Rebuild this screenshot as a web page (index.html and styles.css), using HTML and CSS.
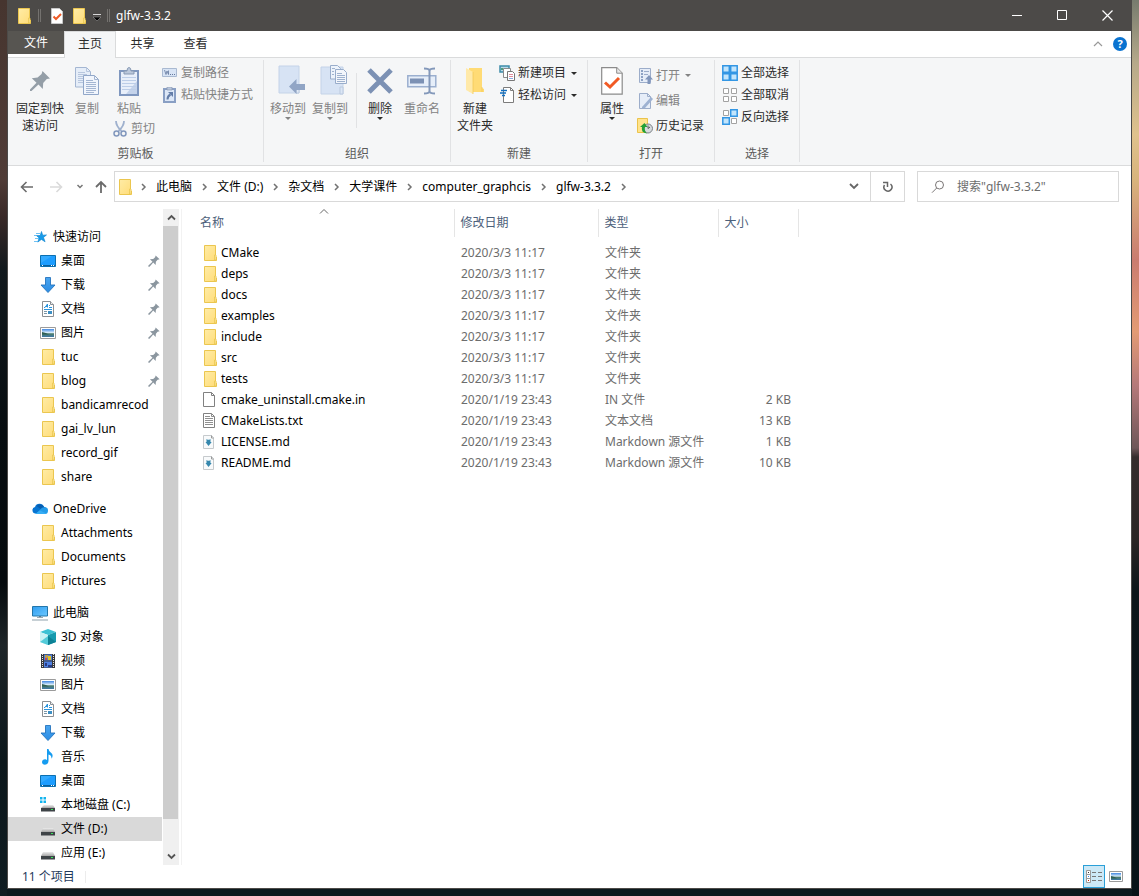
FILE: index.html
```html
<!DOCTYPE html>
<html lang="zh-CN">
<head>
<meta charset="utf-8">
<title>glfw-3.3.2</title>
<link rel="stylesheet" href="styles.css">
</head>
<body>
<svg class="sprite" width="0" height="0" aria-hidden="true">
  <defs>
    <linearGradient id="g-folder" x1="0" y1="0" x2="1" y2="1"><stop offset="0" stop-color="#ffeca6"/><stop offset="1" stop-color="#ffdc78"/></linearGradient>
    <linearGradient id="g-photo" x1="0" y1="0" x2="0" y2="1"><stop offset="0" stop-color="#3f86e0"/><stop offset="0.45" stop-color="#d9ecfb"/><stop offset="0.6" stop-color="#4d7c6a"/><stop offset="1" stop-color="#3d78a8"/></linearGradient>
    <linearGradient id="g-screen" x1="0" y1="0" x2="1" y2="1"><stop offset="0" stop-color="#2f9df0"/><stop offset="1" stop-color="#6cc8ff"/></linearGradient>
    <linearGradient id="g-drive" x1="0" y1="0" x2="0" y2="1"><stop offset="0" stop-color="#ececec"/><stop offset="1" stop-color="#a5a5a5"/></linearGradient>
    <linearGradient id="g-arrow" x1="0" y1="0" x2="0" y2="1"><stop offset="0" stop-color="#4aa5ef"/><stop offset="1" stop-color="#2b8ce4"/></linearGradient>
  </defs>
  <symbol id="folder" viewBox="0 0 16 16"><path d="M2.500 .5h11v11.500h1v3.500h-12z" fill="url(#g-folder)" stroke="#ebc64f"/><path d="M12.500 15v-5h1.500v5z" fill="#ffe9a2" stroke="#ebc64f" stroke-width=".8"/></symbol>
  <symbol id="desktop" viewBox="0 0 16 16"><path d="M.5 2.500h15v11h-15z" fill="#1e9dff" stroke="#0b6fb0"/><path d="M1 10L12 3H1z" fill="#33aaff"/><path d="M1 12.500h14" stroke="#0b5f9c"/><path d="M2 12.500h1M11 12.500h1M13 12.500h1" stroke="#fff"/></symbol>
  <symbol id="download" viewBox="0 0 16 16"><path d="M5.500 .5h5v7.500h4.500L8 15.500 1 8h4.500z" fill="url(#g-arrow)" stroke="#2674bd" stroke-width=".9"/></symbol>
  <symbol id="document" viewBox="0 0 16 16"><path d="M2.500 .5h8l3 3v12h-11z" fill="#fff" stroke="#8b8f93"/><path d="M10.500 .5v3h3" fill="#eee" stroke="#8b8f93"/><path d="M4 6.500h1L7.500 3v3.500M5.500 5.500h2M9 4.500h1M9 6.500h3M4 8.500h8" stroke="#2a93dc" fill="none"/><path d="M4 10.500h3M4 12.500h3" stroke="#7d97a8"/><path d="M8 10h4v3H8z" fill="#3c8fc4"/></symbol>
  <symbol id="picture" viewBox="0 0 16 16"><path d="M.5 2.500h15v11h-15z" fill="#fff" stroke="#9b9b9b"/><path d="M2 4h12v8H2z" fill="url(#g-photo)"/><path d="M2 7q4 .5 7 2.500H2z" fill="#2f5f55"/></symbol>
  <symbol id="pin" viewBox="0 0 16 16"><path d="M10.200 .5L15.500 5.800l-2.700.4-2.300 2.700-.3 4.300-3.200-3.200L2 15.500H.5V14L6 9 2.600 5.800l4.300-.4 2.600-2.300z" fill="#8b969f"/></symbol>
  <symbol id="star" viewBox="0 0 16 16"><path d="M9.500 2.500l1.200 3.700 3.800-.3-3 2.600 1.600 4.300-3.700-2.400-3.600 2.700 1.300-4.200-2.800-2.400 3.800.1z" fill="#169bea" stroke="#0b82cc" stroke-width=".6"/><path d="M4 4.500h4M2 6.500h3M3 9.500h4M2 12.500h4" stroke="#4bb2f1" stroke-width=".8"/></symbol>
  <symbol id="cloud" viewBox="0 0 16 16"><path d="M3.500 12.500A3.300 3.300 0 0 1 3 6a4.800 4.800 0 0 1 9-.2 3.500 3.500 0 0 1 .5 6.700z" fill="#0874d1"/><path d="M4.500 5A4.800 4.800 0 0 1 12 5.800l-3 2.500z" fill="#075eb0"/><path d="M3.500 13L10 6.800q6-2 6 2.700 0 3.500-3 3.500z" fill="#239be9"/><path d="M3 13l5-3.500 6.500 3q-1 .5-1.500.5z" fill="#36adf5"/></symbol>
  <symbol id="pc" viewBox="0 0 16 16"><path d="M.5 1.500h15v9.500H.5z" fill="url(#g-screen)" stroke="#2376aa"/><path d="M5 12.500h6" stroke="#9aa9b1"/><path d="M0 15h16" stroke="#8fa1ac"/><path d="M7 11.500h2" stroke="#547e94"/></symbol>
  <symbol id="cube" viewBox="0 0 16 16"><path d="M0 3l8-3 8 3-8 3z" fill="#3cc1d4"/><path d="M0 3l8 3v10l-8-3z" fill="#c9f2f5"/><path d="M8 6l8-3v10l-8 3z" fill="#169aae"/><path d="M0 13l8-6v9z" fill="#54cbd9"/><path d="M16 13L8 7v9z" fill="#0d8195"/></symbol>
  <symbol id="video" viewBox="0 0 16 16"><path d="M1 1h14v14H1z" fill="#37383b"/><path d="M4 1.500h8v6H4zM4 8.500h8v6H4z" fill="#4c7fe2"/><path d="M5 2h3v3H5z" fill="#b99a53"/><path d="M8 3h3v4H8z" fill="#dfc328"/><path d="M5 10h2v3H5zM8 12h4v2H8z" fill="#283c83"/><path d="M5 5h2v2H5z" fill="#c64b50"/><path d="M2.500 1v14M13.500 1v14" stroke="#e5e5e5" stroke-dasharray="1 1"/></symbol>
  <symbol id="music" viewBox="0 0 16 16"><path d="M7 0h1.500q.3 2.200 2.500 3.800 3 2.200.5 6 .2-3.600-3-4.300V12q-.2 3.500-3.500 3.700-3-.2-3-2.700.3-3 3.500-2.800L7 11z" fill="#159cf0"/></symbol>
  <symbol id="drive" viewBox="0 0 16 16"><path d="M3 7h10l2 4H1z" fill="url(#g-drive)"/><path d="M1 11h14v3.500H1z" fill="#3e4347"/><path d="M11 12.500h2" stroke="#39e45a"/></symbol>
  <symbol id="drive-win" viewBox="0 0 16 16"><path d="M4 8h9l2 3H1z" fill="url(#g-drive)"/><path d="M1 11h14v3.500H1z" fill="#3e4347"/><path d="M11 12.500h2" stroke="#39e45a"/><path d="M0 0h2.500v2.500H0zM3.500 0H6v2.500H3.500zM0 3.500h2.500V6H0zM3.500 3.500H6V6H3.500z" fill="#12b4ee"/></symbol>
  <symbol id="file" viewBox="0 0 16 16"><path d="M1.500 .5h8l3 3v11h-11z" fill="#fff" stroke="#818181"/><path d="M9.500 .5v3h3" fill="none" stroke="#818181"/></symbol>
  <symbol id="text-file" viewBox="0 0 16 16"><path d="M1.500 .5h8l3 3v11h-11z" fill="#fff" stroke="#818181"/><path d="M9.500 .5v3h3M3 3.500h5M3 5.500h8M3 7.500h8M3 9.500h8M3 11.500h8" fill="none" stroke="#909090"/></symbol>
  <symbol id="md-file" viewBox="0 0 16 16"><path d="M1.500 1.500h8l2 2v11h-10z" fill="#f8fafb" stroke="#c6cacd"/><path d="M9.500 1.500v2.500h2" fill="none" stroke="#999"/><path d="M4.500 5l1.200.7h1.600L8.500 5v3h1.200L6.500 12 3.500 8h1z" fill="#3587ad"/></symbol>
  <symbol id="big-pin" viewBox="0 0 24 24"><path d="M14.500 2L22 9.500l-3.200.6-3.600 4-.4 5.800L10.500 15.500 3.500 22H2v-1.500L8.500 13.700 3.800 9.300l5.800-.7 4-3.500z" fill="#949ea7"/></symbol>
  <symbol id="big-copy" viewBox="0 0 24 28"><path d="M.5 .5h11l4 4V20H.5z" fill="#e5edf8" stroke="#a4b6d2"/><path d="M11.500 .5v4h4M3 5.500h7M3 7.500h9M3 9.500h9M3 11.500h9M3 13.500h6M3 15.500h6" fill="none" stroke="#b7c6de"/><path d="M8.500 8.500h11l4 4v15h-15z" fill="#f1f5fc" stroke="#91a7c9"/><path d="M19.500 8.500v4h4M11 13.500h7M11 15.500h10M11 17.500h10M11 19.500h10M11 21.500h10M11 23.500h10M11 25.500h8" fill="none" stroke="#a4b6d2"/></symbol>
  <symbol id="big-paste" viewBox="0 0 20 29"><path d="M1 4h18v24H1z" fill="#e8effa" stroke="#7f97bf" stroke-width="2"/><path d="M18 14v13H7z" fill="#c4d3eb"/><path d="M5 7V4h3q0-3.500 2-3.500T12 4h3v3z" fill="#bac7db" stroke="#8799b3"/><path d="M3 10.500h14M3 13.500h14M3 16.500h14M3 19.500h14M3 22.500h14" stroke="#bdcee8"/></symbol>
  <symbol id="cut" viewBox="0 0 16 16"><path d="M3 0q0 5 5.500 10M11 0q0 5-5.500 10" fill="none" stroke="#9fb1ce" stroke-width="1.800"/><circle cx="3.500" cy="12.500" r="2.500" fill="none" stroke="#8197bd" stroke-width="1.500"/><circle cx="10.500" cy="12.500" r="2.500" fill="none" stroke="#8197bd" stroke-width="1.500"/></symbol>
  <symbol id="path" viewBox="0 0 16 16"><path d="M.5 3.500h14v8H.5z" fill="#d8e4f5" stroke="#a9b9d1"/><path d="M2.500 5l1.500 4.500L5 6l1.500 3.500V5.500" fill="none" stroke="#65799e" stroke-width=".8"/><path d="M8 9.500h1M10 9.500h1M12 9.500h1" stroke="#65799e"/></symbol>
  <symbol id="paste-link" viewBox="0 0 16 16"><path d="M2 2h11v13H2z" fill="#dce7f7" stroke="#899fc4" stroke-width="2"/><path d="M5 0h5v3H5z" fill="#b9c7dc" stroke="#8a9ab1" stroke-width=".7"/><path d="M5.500 12.500q0-3.500 3-5" fill="none" stroke="#637da8" stroke-width="2"/><path d="M6 5h5v5z" fill="#637da8"/></symbol>
  <symbol id="big-move" viewBox="0 0 28 30"><path d="M1 1h20v27H1z" fill="#d7e3f4" stroke="#c4d3e8"/><path d="M18 21l3 2v5h-3z" fill="#e1eaf6" stroke="#bac9df"/><path d="M11 21.500L18.500 14v5H27v6h-8.500v4z" fill="#91a5c5"/></symbol>
  <symbol id="big-copyto" viewBox="0 0 28 30"><path d="M1 2h22v27H1z" fill="#d7e3f4" stroke="#c4d3e8"/><path d="M20 22h3v7h-3z" fill="#dbe6f5" stroke="#bac9df"/><path d="M10.500 .5h7l3 3V14h-10z" fill="#edf3fb" stroke="#99adcb"/><path d="M15.500 4.500h8l3 3v11h-11z" fill="#f3f6fb" stroke="#99adcb"/><path d="M12 3.500h3M12 6.500h2M12 9.500h2M17 8.500h5M17 10.500h8M17 12.500h8M17 14.500h8M17 16.500h8" stroke="#9fb2ce"/></symbol>
  <symbol id="big-delete" viewBox="0 0 28 28"><path d="M3 3l22 22M25 3L3 25" stroke="#7c91b4" stroke-width="5"/></symbol>
  <symbol id="big-rename" viewBox="0 0 30 28"><path d="M.8 8.800h28v11H.8z" fill="#e6eef9" stroke="#9bafcf" stroke-width="1.500"/><path d="M3 11.500h14v5H3z" fill="#7c91b4"/><path d="M17 1.500q5 0 5.500 2 .5-2 5.500-2M22.500 3v22M17 26.500q5 0 5.500-2 .5 2 5.500 2" fill="none" stroke="#8398ba" stroke-width="2"/></symbol>
  <symbol id="big-folder" viewBox="0 0 20 28"><path d="M4 1h13v20l2 1v3H4z" fill="#ffdb75"/><path d="M1 1l7 4v22l-7-4z" fill="#ffe9a9"/><path d="M8 5v22M17 20v5" stroke="#f3c955" stroke-width=".8"/></symbol>
  <symbol id="new-item" viewBox="0 0 16 16"><path d="M1 1h9v6H1z" fill="#b9dbe9" stroke="#3c8ca9" stroke-width="1.500"/><path d="M4.500 3.500h7v9h-7z" fill="#fff" stroke="#8b8b8b"/><path d="M8.500 6.500h5l2 2v7h-7z" fill="#fff" stroke="#777"/><path d="M10 9.500h4M10 11.500h4" stroke="#df8b9d"/><path d="M10 13.500h4" stroke="#8ba9df"/><path d="M2 3h2v2H2z" fill="#4e9e7a"/></symbol>
  <symbol id="easy-access" viewBox="0 0 16 16"><path d="M4.500 .5h7l3 3v12h-10z" fill="#fff" stroke="#7c7c7c"/><path d="M11.500 .5v3h3" fill="none" stroke="#7c7c7c"/><path d="M2 3.500h6M1 6h6M3 8.500h3" stroke="#126fc0" stroke-width="1.300"/></symbol>
  <symbol id="big-props" viewBox="0 0 22 28"><path d="M.7 .7h15l5.500 5.500v21H.7z" fill="#fff" stroke="#8b8b8b" stroke-width="1.200"/><path d="M15.700 .7v5.500h5.500" fill="#e9e9e9" stroke="#8b8b8b"/><path d="M4 15.500l5 4.500 9-9" fill="none" stroke="#f15a24" stroke-width="3"/></symbol>
  <symbol id="open" viewBox="0 0 16 16"><path d="M2.500 .5h11v14h-11z" fill="#e6edf8" stroke="#9cadca"/><path d="M4 2h2v2H4zM4 5h2v2H4zM4 8h2v2H4zM4 11h2v2H4z" fill="#8da2c4"/><path d="M7 3.500h5M7 6.500h4" stroke="#9cadca"/><path d="M12 7l4 4.500h-2.500V16h-3v-4.500H8z" fill="#8196bb"/></symbol>
  <symbol id="edit" viewBox="0 0 16 16"><path d="M2.500 .5h8l3 3v12h-11z" fill="#e6edf8" stroke="#9cadca"/><path d="M5 14L14 4l2 2-8 9H5z" fill="#9eb2d2"/><path d="M10.500 .5v3h3" fill="none" stroke="#9cadca"/></symbol>
  <symbol id="history" viewBox="0 0 16 16"><path d="M.5 .5h10v14H.5z" fill="#ffe38c" stroke="#ebc34b"/><circle cx="11" cy="10.500" r="4.500" fill="#d6dadd" stroke="#7d8287"/><path d="M11 7.500v3l2-1.500" fill="none" stroke="#555"/><path d="M10 15.500Q3.500 14.500 5 9H3L7.500 5l3 4H8Q7 12.500 10 15.500z" fill="#23a036"/></symbol>
  <symbol id="select-all" viewBox="0 0 16 16"><path d="M.8 .8h6.500v6.500H.8zM8.700 .8h6.500v6.500H8.700zM.8 8.700h6.500v6.500H.8zM8.700 8.700h6.500v6.500H8.700z" fill="#c2e5fc" stroke="#3296e4" stroke-width="1.500"/></symbol>
  <symbol id="select-none" viewBox="0 0 16 16"><path d="M1.500 1.500h5v5h-5zM9.500 1.500h5v5h-5zM1.500 9.500h5v5h-5zM9.500 9.500h5v5h-5z" fill="#fff" stroke="#a2a2a2"/></symbol>
  <symbol id="select-inv" viewBox="0 0 16 16"><path d="M1.500 1.500h5v5h-5zM9.500 9.500h5v5h-5z" fill="#fff" stroke="#a2a2a2"/><path d="M8.700 .8h6.500v6.500H8.700zM.8 8.700h6.500v6.500H.8z" fill="#c2e5fc" stroke="#3296e4" stroke-width="1.500"/></symbol>
  <symbol id="chevron" viewBox="0 0 6 8"><path d="M1.500 1L4.500 4l-3 3" fill="none" stroke="#727272" stroke-width="1.500"/></symbol>
  <symbol id="caret" viewBox="0 0 6 3"><path d="M0 0h6L3 3z" fill="currentColor"/></symbol>
  <symbol id="props" viewBox="0 0 16 16"><path d="M2.500 .5h8l3 3v12h-11z" fill="#fff" stroke="#c8c8c8"/><path d="M4.500 8.500L7 11l5-5" fill="none" stroke="#ee5b27" stroke-width="2"/></symbol>
</svg>

<div class="window">
  <header class="titlebar">
    <svg class="i16"><use href="#folder"/></svg>
    <span class="grip"></span>
    <button class="quick" aria-label="属性"><svg class="i16"><use href="#props"/></svg></button>
    <button class="quick" aria-label="新建文件夹"><svg class="i16"><use href="#folder"/></svg></button>
    <button class="quick-more" aria-label="自定义快速访问工具栏"><svg width="8" height="7" viewBox="0 0 8 7"><path d="M0 .5h8" stroke="#d8d8d8"/><path d="M0 3h8L4 7z" fill="#000" stroke="#aaa" stroke-width=".5"/></svg></button>
    <span class="grip grip-last"></span>
    <h1 class="title">glfw-3.3.2</h1>
    <div class="controls">
      <button aria-label="最小化"><svg width="11" height="11"><path d="M0 5.500h10" stroke="#fff"/></svg></button>
      <button aria-label="最大化"><svg width="11" height="11"><path d="M.5 .5h9v9h-9z" fill="none" stroke="#fff"/></svg></button>
      <button aria-label="关闭"><svg width="11" height="11"><path d="M.5 .5l10 10M10.500 .5l-10 10" stroke="#fff" stroke-width="1.200"/></svg></button>
    </div>
  </header>

  <nav class="tabs">
    <button class="tab tab-file">文件</button>
    <button class="tab tab-active">主页</button>
    <button class="tab">共享</button>
    <button class="tab">查看</button>
    <div class="tabs-end">
      <button aria-label="最小化功能区"><svg width="10" height="6"><path d="M1 5l4-4 4 4" fill="none" stroke="#999" stroke-width="1.200"/></svg></button>
      <button class="help" aria-label="帮助">?</button>
    </div>
  </nav>

  <section class="ribbon">
    <div class="group group-clip">
      <div class="tools">
        <button class="big w-pin"><span class="pic"><svg width="24" height="24"><use href="#big-pin"/></svg></span>固定到快<br>速访问</button>
        <button class="big w-40 dim"><span class="pic"><svg width="24" height="28"><use href="#big-copy"/></svg></span>复制</button>
        <div class="stack-paste">
          <button class="big w-44 dim"><span class="pic"><svg width="20" height="29"><use href="#big-paste"/></svg></span>粘贴</button>
          <button class="small dim"><svg class="i16"><use href="#cut"/></svg>剪切</button>
        </div>
        <div class="stack">
          <button class="small dim"><svg class="i16"><use href="#path"/></svg>复制路径</button>
          <button class="small dim"><svg class="i16"><use href="#paste-link"/></svg>粘贴快捷方式</button>
        </div>
      </div>
      <div class="caption">剪贴板</div>
    </div>
    <div class="group group-org">
      <div class="tools">
        <button class="big w-42 dim"><span class="pic pic-right"><svg width="28" height="30"><use href="#big-move"/></svg></span>移动到<svg class="caret"><use href="#caret"/></svg></button>
        <button class="big w-42 dim"><span class="pic pic-right"><svg width="28" height="30"><use href="#big-copyto"/></svg></span>复制到<svg class="caret"><use href="#caret"/></svg></button>
        <span class="rule"></span>
        <button class="big w-44"><span class="pic"><svg width="28" height="28"><use href="#big-delete"/></svg></span>删除<svg class="caret"><use href="#caret"/></svg></button>
        <button class="big w-40 dim"><span class="pic"><svg width="30" height="28"><use href="#big-rename"/></svg></span>重命名</button>
      </div>
      <div class="caption">组织</div>
    </div>
    <div class="group group-new">
      <div class="tools">
        <button class="big w-44"><span class="pic"><svg width="20" height="28"><use href="#big-folder"/></svg></span>新建<br>文件夹</button>
        <div class="stack">
          <button class="small"><svg class="i16"><use href="#new-item"/></svg>新建项目<svg class="caret"><use href="#caret"/></svg></button>
          <button class="small"><svg class="i16"><use href="#easy-access"/></svg>轻松访问<svg class="caret"><use href="#caret"/></svg></button>
        </div>
      </div>
      <div class="caption">新建</div>
    </div>
    <div class="group group-open">
      <div class="tools">
        <button class="big w-40"><span class="pic"><svg width="22" height="28"><use href="#big-props"/></svg></span>属性<svg class="caret"><use href="#caret"/></svg></button>
        <div class="stack stack-tall">
          <button class="small dim"><svg class="i16"><use href="#open"/></svg>打开<svg class="caret"><use href="#caret"/></svg></button>
          <button class="small dim"><svg class="i16"><use href="#edit"/></svg>编辑</button>
          <button class="small"><svg class="i16"><use href="#history"/></svg>历史记录</button>
        </div>
      </div>
      <div class="caption">打开</div>
    </div>
    <div class="group group-select">
      <div class="tools">
        <div class="stack">
          <button class="small"><svg class="i16"><use href="#select-all"/></svg>全部选择</button>
          <button class="small"><svg class="i16"><use href="#select-none"/></svg>全部取消</button>
          <button class="small"><svg class="i16"><use href="#select-inv"/></svg>反向选择</button>
        </div>
      </div>
      <div class="caption">选择</div>
    </div>
  </section>

  <div class="navbar">
    <div class="arrows">
      <button aria-label="后退"><svg width="14" height="12"><path d="M13 6H2M6.500 1L1.500 6l5 5" fill="none" stroke="#6b6b6b" stroke-width="1.600"/></svg></button>
      <button aria-label="前进"><svg width="14" height="12"><path d="M1 6h11M7.500 1l5 5-5 5" fill="none" stroke="#dadada" stroke-width="1.600"/></svg></button>
      <button class="recent" aria-label="最近的位置"><svg width="8" height="6"><path d="M1.500 1L4 3.500 6.500 1" fill="none" stroke="#777" stroke-width="1.500"/></svg></button>
      <button aria-label="上移"><svg width="12" height="14"><path d="M6 13V2M1 7l5-5 5 5" fill="none" stroke="#6b6b6b" stroke-width="1.800"/></svg></button>
    </div>
    <div class="address">
      <svg class="i16"><use href="#folder"/></svg>
      <svg class="sep"><use href="#chevron"/></svg><a href="#">此电脑</a>
      <svg class="sep"><use href="#chevron"/></svg><a href="#">文件 (D:)</a>
      <svg class="sep"><use href="#chevron"/></svg><a href="#">杂文档</a>
      <svg class="sep"><use href="#chevron"/></svg><a href="#">大学课件</a>
      <svg class="sep"><use href="#chevron"/></svg><a href="#">computer_graphcis</a>
      <svg class="sep"><use href="#chevron"/></svg><a href="#">glfw-3.3.2</a>
      <svg class="sep"><use href="#chevron"/></svg>
      <button class="history" aria-label="以前的位置"><svg width="10" height="7"><path d="M1 1l4 4 4-4" fill="none" stroke="#666" stroke-width="1.800"/></svg></button>
      <button class="refresh" aria-label="刷新"><svg width="12" height="12"><path d="M8.500 3A4 4 0 1 1 2.500 4" fill="none" stroke="#666" stroke-width="1.500"/><path d="M1 1.500h4.500V6" fill="none" stroke="#666" stroke-width="1.500"/></svg></button>
    </div>
    <label class="search">
      <svg width="14" height="14"><circle cx="8.500" cy="5" r="4" fill="none" stroke="#7b7777"/><path d="M5.700 8L1 12.700" stroke="#7b7777"/></svg>
      <input type="text" aria-label="搜索" placeholder="搜索&quot;glfw-3.3.2&quot;">
    </label>
  </div>

  <main class="main">
    <aside class="side">
      <nav class="tree">
        <a class="node root" href="#"><svg class="i16"><use href="#star"/></svg>快速访问</a>
        <a class="node" href="#"><svg class="i16"><use href="#desktop"/></svg>桌面<svg class="pinned"><use href="#pin"/></svg></a>
        <a class="node" href="#"><svg class="i16"><use href="#download"/></svg>下载<svg class="pinned"><use href="#pin"/></svg></a>
        <a class="node" href="#"><svg class="i16"><use href="#document"/></svg>文档<svg class="pinned"><use href="#pin"/></svg></a>
        <a class="node" href="#"><svg class="i16"><use href="#picture"/></svg>图片<svg class="pinned"><use href="#pin"/></svg></a>
        <a class="node" href="#"><svg class="i16"><use href="#folder"/></svg>tuc<svg class="pinned"><use href="#pin"/></svg></a>
        <a class="node" href="#"><svg class="i16"><use href="#folder"/></svg>blog<svg class="pinned"><use href="#pin"/></svg></a>
        <a class="node" href="#"><svg class="i16"><use href="#folder"/></svg>bandicamrecod</a>
        <a class="node" href="#"><svg class="i16"><use href="#folder"/></svg>gai_lv_lun</a>
        <a class="node" href="#"><svg class="i16"><use href="#folder"/></svg>record_gif</a>
        <a class="node" href="#"><svg class="i16"><use href="#folder"/></svg>share</a>
        <a class="node root spaced" href="#"><svg class="i16"><use href="#cloud"/></svg>OneDrive</a>
        <a class="node" href="#"><svg class="i16"><use href="#folder"/></svg>Attachments</a>
        <a class="node" href="#"><svg class="i16"><use href="#folder"/></svg>Documents</a>
        <a class="node" href="#"><svg class="i16"><use href="#folder"/></svg>Pictures</a>
        <a class="node root spaced" href="#"><svg class="i16"><use href="#pc"/></svg>此电脑</a>
        <a class="node" href="#"><svg class="i16"><use href="#cube"/></svg>3D 对象</a>
        <a class="node" href="#"><svg class="i16"><use href="#video"/></svg>视频</a>
        <a class="node" href="#"><svg class="i16"><use href="#picture"/></svg>图片</a>
        <a class="node" href="#"><svg class="i16"><use href="#document"/></svg>文档</a>
        <a class="node" href="#"><svg class="i16"><use href="#download"/></svg>下载</a>
        <a class="node" href="#"><svg class="i16"><use href="#music"/></svg>音乐</a>
        <a class="node" href="#"><svg class="i16"><use href="#desktop"/></svg>桌面</a>
        <a class="node" href="#"><svg class="i16"><use href="#drive-win"/></svg>本地磁盘 (C:)</a>
        <a class="node selected" href="#"><svg class="i16"><use href="#drive"/></svg>文件 (D:)</a>
        <a class="node" href="#"><svg class="i16"><use href="#drive"/></svg>应用 (E:)</a>
      </nav>
      <div class="scrollbar">
        <button aria-label="向上滚动"><svg width="9" height="7"><path d="M1 5.500L4.500 2 8 5.500" fill="none" stroke="#555" stroke-width="1.800"/></svg></button>
        <div class="track"><div class="thumb"></div></div>
        <button aria-label="向下滚动"><svg width="9" height="7"><path d="M1 1.500L4.500 5 8 1.500" fill="none" stroke="#555" stroke-width="1.800"/></svg></button>
      </div>
    </aside>

    <section class="files">
      <table>
        <colgroup><col class="c-name"><col class="c-date"><col class="c-type"><col class="c-size"></colgroup>
        <thead><tr><th><span>名称</span><svg class="sort" width="10" height="5"><path d="M1 4.500l4-4 4 4" fill="none" stroke="#666"/></svg></th><th>修改日期</th><th>类型</th><th>大小</th></tr></thead>
        <tbody>
          <tr><td><svg class="i16"><use href="#folder"/></svg>CMake</td><td>2020/3/3 11:17</td><td>文件夹</td><td></td></tr>
          <tr><td><svg class="i16"><use href="#folder"/></svg>deps</td><td>2020/3/3 11:17</td><td>文件夹</td><td></td></tr>
          <tr><td><svg class="i16"><use href="#folder"/></svg>docs</td><td>2020/3/3 11:17</td><td>文件夹</td><td></td></tr>
          <tr><td><svg class="i16"><use href="#folder"/></svg>examples</td><td>2020/3/3 11:17</td><td>文件夹</td><td></td></tr>
          <tr><td><svg class="i16"><use href="#folder"/></svg>include</td><td>2020/3/3 11:17</td><td>文件夹</td><td></td></tr>
          <tr><td><svg class="i16"><use href="#folder"/></svg>src</td><td>2020/3/3 11:17</td><td>文件夹</td><td></td></tr>
          <tr><td><svg class="i16"><use href="#folder"/></svg>tests</td><td>2020/3/3 11:17</td><td>文件夹</td><td></td></tr>
          <tr><td><svg class="i16"><use href="#file"/></svg>cmake_uninstall.cmake.in</td><td>2020/1/19 23:43</td><td>IN 文件</td><td>2 KB</td></tr>
          <tr><td><svg class="i16"><use href="#text-file"/></svg>CMakeLists.txt</td><td>2020/1/19 23:43</td><td>文本文档</td><td>13 KB</td></tr>
          <tr><td><svg class="i16"><use href="#md-file"/></svg>LICENSE.md</td><td>2020/1/19 23:43</td><td>Markdown 源文件</td><td>1 KB</td></tr>
          <tr><td><svg class="i16"><use href="#md-file"/></svg>README.md</td><td>2020/1/19 23:43</td><td>Markdown 源文件</td><td>10 KB</td></tr>
        </tbody>
      </table>
    </section>
  </main>

  <footer class="status">
    <span class="count">11 个项目</span>
    <div class="views">
      <button class="view view-on" aria-label="详细信息"><svg width="16" height="14"><path d="M.5 .5h4v4h-4zM.5 4.500h4v4h-4zM.5 8.500h4v4h-4z" fill="#fff" stroke="#999"/><path d="M6 2.500h4M12 2.500h4M6 6.500h4M12 6.500h4M6 10.500h4M12 10.500h4" stroke="#777"/><path d="M2 2.500h1" stroke="#333"/><path d="M2 6.500h1" stroke="#38f"/><path d="M2 10.500h1" stroke="#c20"/></svg></button>
      <button class="view" aria-label="大图标"><svg width="14" height="11"><path d="M.5 .5h13v10H.5z" fill="#fff" stroke="#9b9b9b"/><path d="M2 2h10v7H2z" fill="url(#g-photo)"/><path d="M2 5q4 .5 6 2.500H2z" fill="#2f5f55"/></svg></button>
    </div>
  </footer>
</div>
</body>
</html>
```

FILE: styles.css
```css
* { box-sizing: border-box; }

body {
  margin: 0;
  height: 100vh;
  padding: 0 7px 7px;
  display: flex;
  flex-direction: column;
  overflow: hidden;
  font: 12px/16px "Noto Sans", "Noto Sans CJK SC", sans-serif;
  color: #000;
  background:
    linear-gradient(#46352f, #503c37 20%, #3a2a28 24%, #12191d 30%, #070d10 48%, #050a0d 65%, #1e2528 72%, #0c171b 85%, #101d22) left / 7px 100% no-repeat,
    linear-gradient(#767b6e, #b6a98a 7%, #dfc28d 15%, #d8b47c 20%, #ca7c70 29%, #e39b74 37%, #b5797a 43%, #6e5759 50%, #352d2d 51%, #2b2625 60%, #0d161a 66%, #081318) right / 7px 100% no-repeat,
    #0c191e;
}

button {
  margin: 0;
  padding: 0;
  border: 0;
  background: none;
  font: inherit;
  color: inherit;
}

a { color: inherit; text-decoration: none; }
svg { display: block; flex: none; }
.i16 { width: 16px; height: 16px; }
.sprite { height: 0; }

.window {
  flex: 1;
  min-height: 0;
  display: flex;
  flex-direction: column;
  background: #fff;
  border: 1px solid #4c4a48;
  border-top: 0;
}

/* Title bar */
.titlebar {
  height: 31px;
  flex: none;
  display: flex;
  align-items: center;
  padding-left: 8px;
  background: #4c4a48;
  color: #fff;
}
.grip {
  width: 3px;
  height: 13px;
  margin: 0 8px 0 6px;
  border: solid #74726f;
  border-width: 0 1px;
}
.grip-last { margin: 0 6px; }
.quick { margin-right: 6px; }
.quick-more { padding-top: 4px; }
.title { margin: 0; font: inherit; }
.controls { margin-left: auto; display: flex; height: 100%; padding-right: 1px; }
.controls button { width: 45px; display: grid; place-items: center; }

/* Tabs */
.tabs {
  height: 27px;
  flex: none;
  display: flex;
  align-items: flex-start;
  color: #2b2b2b;
  border-bottom: 1px solid #dadbdc;
}
.tab { width: 53px; height: 24px; padding-top: 1px; }
.tab-file { width: 56px; height: 23px; background: #575551; color: #fff; }
.tab-active {
  width: 52px;
  height: 27px;
  padding-bottom: 4px;
  background: #f5f6f7;
  border: solid #dadbdc;
  border-width: 1px 1px 0;
}
.tabs-end { margin-left: auto; height: 26px; display: flex; align-items: center; gap: 10px; padding-right: 4px; }
.help {
  width: 14px;
  height: 14px;
  border-radius: 50%;
  background: #0a73d0;
  color: #fff;
  font-size: 11px;
  line-height: 14px;
  font-weight: bold;
}

/* Ribbon */
.ribbon {
  flex: none;
  display: flex;
  padding: 2px 0 3px;
  background: #f5f6f7;
  border-bottom: 1px solid #dadbdc;
  color: #2b2b2b;
}
.group { display: flex; flex-direction: column; border-right: 1px solid #e1e2e4; }
.tools { height: 85px; display: flex; align-items: flex-start; }
.caption { line-height: 17px; text-align: center; color: #5a5a5a; }
.group-clip { width: 256px; }
.group-clip .tools { padding-left: 5px; }
.group-org { width: 187px; }
.group-org .tools { padding-left: 3px; }
.group-new { width: 137px; }
.group-new .tools { padding-left: 2px; }
.group-open { width: 127px; }
.group-open .tools { padding-left: 4px; }
.group-select { width: 85px; }
.group-select .tools { padding-left: 5px; }

.big { display: block; padding-top: 4px; line-height: 17px; text-align: center; white-space: nowrap; }
.pic { height: 36px; display: flex; align-items: flex-start; justify-content: center; padding-top: 3px; }
.w-pin .pic { padding-top: 5px; }
.pic-right { justify-content: flex-end; padding: 1px 3px 0 0; }
.big .caret { margin: 0 auto; }
.w-pin { width: 54px; }
.w-40 { width: 40px; }
.w-42 { width: 42px; }
.w-44 { width: 44px; }
.dim { color: #838383; }
.caret { width: 6px; height: 3px; }
.small { display: flex; align-items: center; gap: 3px; height: 22px; white-space: nowrap; }
.small .caret { margin-left: 2px; }
.stack { padding: 2px; }
.stack-paste { width: 53px; }
.stack-paste .small { height: 24px; padding-left: 6px; gap: 2px; }
.stack-tall { padding-left: 5px; padding-top: 3px; }
.stack-tall .small { height: 25px; }
.rule { width: 1px; height: 55px; margin: 13px 1px 0 5px; background: #e1e2e4; }

/* Navigation bar */
.navbar {
  height: 43px;
  flex: none;
  display: flex;
  align-items: flex-start;
  padding: 5px 12px 0 0;
}
.arrows { width: 106px; height: 31px; display: flex; align-items: center; padding-left: 12px; gap: 15px; }
.arrows .recent { margin: 0 -4px 0 -2px; }
.address {
  flex: 1;
  height: 31px;
  display: flex;
  align-items: center;
  padding-left: 2px;
  border: 1px solid #d9d9d9;
  white-space: nowrap;
}
.address .sep { width: 25px; height: 8px; }
.address .i16 { margin-right: -2px; }
.history { margin-left: auto; padding: 0 11px; }
.refresh { width: 34px; height: 100%; display: grid; place-items: center; border-left: 1px solid #d9d9d9; }
.search {
  width: 202px;
  height: 31px;
  margin-left: 12px;
  display: flex;
  align-items: center;
  gap: 12px;
  padding-left: 13px;
  border: 1px solid #d9d9d9;
}
.search input {
  flex: 1;
  min-width: 0;
  padding: 0;
  border: 0;
  outline: 0;
  background: none;
  font: inherit;
}
.search input::placeholder { color: #6d6d6d; opacity: 1; }

/* Body */
.main { flex: 1; min-height: 0; display: flex; }
.side { width: 174px; flex: none; display: flex; border-right: 1px solid #f2f2f2; }
.tree { width: 154px; padding-top: 16px; overflow: hidden; }
.node { height: 24px; display: flex; align-items: center; gap: 5px; padding: 0 2px 0 32px; white-space: nowrap; }
.root { padding-left: 24px; }
.spaced { margin-top: 8px; }
.selected { background: #d9d9d9; }
.pinned { width: 12px; height: 12px; margin-left: auto; }
.scrollbar { width: 16px; margin-left: 1px; display: flex; flex-direction: column; background: #f0f0f0; }
.scrollbar button { height: 17px; flex: none; display: grid; place-items: center; }
.track { flex: 1; display: flex; flex-direction: column; padding-bottom: 29px; }
.thumb { width: 15px; flex: 1; background: #cdcdcd; }

/* File list */
.files { flex: 1; min-width: 0; }
table { width: 605px; margin-left: 11px; table-layout: fixed; border-collapse: collapse; }
.c-name { width: 261px; }
.c-date { width: 144px; }
.c-type { width: 120px; }
.c-size { width: 80px; }
th {
  height: 28px;
  padding: 0 6px;
  font-weight: normal;
  text-align: left;
  color: #4c607a;
  border-right: 1px solid #e5e5e5;
}
th:first-child { position: relative; padding-left: 7px; }
.sort { position: absolute; top: 0; left: 126px; }
tbody::before { content: ""; display: block; height: 5px; }
td { height: 21px; padding: 0 7px; color: #6d6d6d; white-space: nowrap; }
td:first-child { display: flex; align-items: center; gap: 3px; padding-left: 9px; color: #000; }
td:last-child { text-align: right; }

/* Status bar */
.status { height: 23px; flex: none; display: flex; align-items: center; color: #1e395b; }
.count { padding: 0 10px 0 14px; line-height: 12px; border-right: 1px solid #ececec; }
.views { margin-left: auto; height: 100%; display: flex; padding-right: 4px; }
.view { width: 22px; height: 23px; display: grid; place-items: center; }
.view-on { background: #cce8f6; border: 1px solid #2a9fd8; }
```
